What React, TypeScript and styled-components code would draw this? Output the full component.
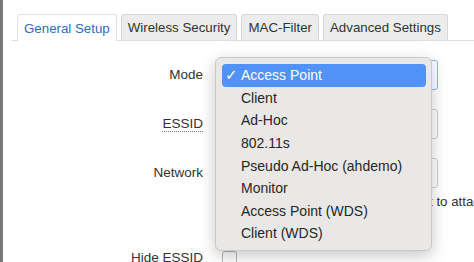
import React from 'react';
import styled, { createGlobalStyle } from 'styled-components';

const GlobalStyle = createGlobalStyle`
  html, body {
    margin: 0;
    padding: 0;
    background: #ffffff;
    font-family: "Liberation Sans", Arial, Helvetica, sans-serif;
    color: #333333;
  }
`;

const Page = styled.div`
  position: relative;
  display: flex;
  width: 474px;
  height: 262px;
  overflow: hidden;
`;

const LeftRule = styled.div`
  flex: 0 0 3px;
  background: #7a7a7a;
`;

const Content = styled.div`
  flex: 1;
  padding-left: 9px;
  padding-top: 14px;
`;

const TabBar = styled.div`
  display: flex;
  gap: 4px;
  padding-left: 5px;
  border-bottom: 1px solid #dedede;
`;

const Tab = styled.div<{ $active?: boolean }>`
  padding: 0 6px;
  display: flex;
  align-items: center;
  font-size: 13.3px;
  border: 1px solid ${(p) => (p.$active ? '#e2e2e2' : '#d6d6d6')};
  border-bottom: none;
  border-radius: 3px 3px 0 0;
  background: ${(p) => (p.$active ? '#ffffff' : '#ececec')};
  color: ${(p) => (p.$active ? '#2f6cc0' : '#333333')};
  margin-bottom: ${(p) => (p.$active ? '-1px' : '0')};
  height: ${(p) => (p.$active ? '26px' : '25px')};
`;

const Form = styled.div`
  display: flex;
  flex-direction: column;
  gap: 19px;
  padding-top: 19px;
`;

const Row = styled.div`
  display: grid;
  grid-template-columns: 191px 216px;
  column-gap: 19px;
  align-items: start;
`;

const Label = styled.div<{ $abbr?: boolean }>`
  height: 30px;
  line-height: 30px;
  text-align: right;
  font-size: 13.5px;
  color: #333333;
  span {
    border-bottom: ${(p) => (p.$abbr ? '1px dotted #777' : 'none')};
    line-height: 14px;
  }
`;

const Field = styled.div`
  display: flex;
  flex-direction: column;
`;

const SelectBox = styled.div<{ $focus?: boolean }>`
  height: 30px;
  box-sizing: border-box;
  border: 1px solid ${(p) => (p.$focus ? '#8fb8ea' : '#cfcfcf')};
  border-radius: 3px;
  background: #ffffff;
  display: flex;
  align-items: center;
  justify-content: flex-end;
  padding-right: 4px;
  font-size: 10px;
  color: #555;
`;

const Description = styled.div`
  padding-left: 20px;
  margin-top: 6px;
  margin-bottom: 15px;
  font-size: 13.3px;
  color: #333333;
  white-space: nowrap;
`;

const Checkbox = styled.div`
  width: 13px;
  height: 13px;
  margin-top: 8px;
  border: 1px solid #b5b5b5;
  border-radius: 3px;
  background: #ffffff;
`;

const Popup = styled.div`
  position: absolute;
  left: 215px;
  top: 57px;
  width: 217px;
  box-sizing: border-box;
  padding: 6px 5px 5px 6px;
  background: #e9e8e7;
  border: 1px solid #c8c8c8;
  border-radius: 6px;
  box-shadow: 0 5px 16px rgba(0, 0, 0, 0.22);
`;

const Option = styled.div<{ $selected?: boolean }>`
  display: flex;
  align-items: center;
  height: 22.6px;
  border-radius: 4px;
  font-size: 14px;
  background: ${(p) => (p.$selected ? '#5092f5' : 'transparent')};
  color: ${(p) => (p.$selected ? '#ffffff' : '#262626')};
`;

const Check = styled.span`
  width: 19px;
  padding-left: 3px;
  box-sizing: border-box;
  font-family: "DejaVu Sans", sans-serif;
  font-size: 15px;
  font-weight: bold;
`;

const modes = [
  'Access Point',
  'Client',
  'Ad-Hoc',
  '802.11s',
  'Pseudo Ad-Hoc (ahdemo)',
  'Monitor',
  'Access Point (WDS)',
  'Client (WDS)',
];

const tabs = ['General Setup', 'Wireless Security', 'MAC-Filter', 'Advanced Settings'];

export default function App(): JSX.Element {
  return (
    <>
      <GlobalStyle />
      <Page>
        <LeftRule />
        <Content>
          <TabBar>
            {tabs.map((t, i) => (
              <Tab key={t} $active={i === 0}>
                {t}
              </Tab>
            ))}
          </TabBar>
          <Form>
            <Row>
              <Label>Mode</Label>
              <SelectBox $focus>⌃</SelectBox>
            </Row>
            <Row>
              <Label $abbr>
                <span>ESSID</span>
              </Label>
              <SelectBox />
            </Row>
            <Row>
              <Label>Network</Label>
              <Field>
                <SelectBox>⌄</SelectBox>
                <Description>Choose the network(s) you want to attach to this wireless interface</Description>
              </Field>
            </Row>
            <Row>
              <Label>Hide ESSID</Label>
              <Checkbox />
            </Row>
          </Form>
        </Content>
        <Popup>
          {modes.map((m, i) => (
            <Option key={m} $selected={i === 0}>
              <Check>{i === 0 ? '✓' : ''}</Check>
              {m}
            </Option>
          ))}
        </Popup>
      </Page>
    </>
  );
}
